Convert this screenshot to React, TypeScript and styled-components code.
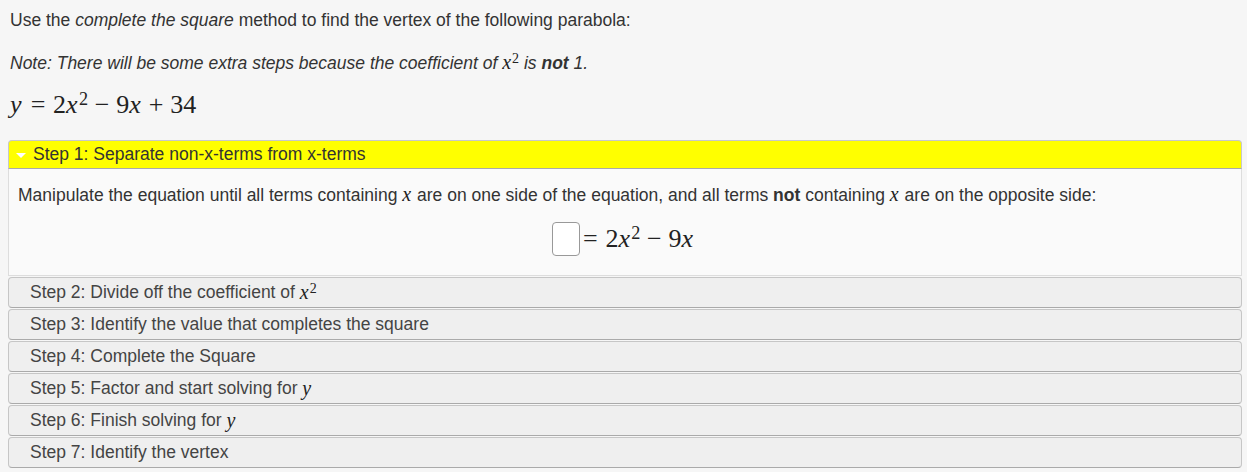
import styled, { createGlobalStyle } from 'styled-components'

const GlobalStyle = createGlobalStyle`
  html, body {
    margin: 0;
    padding: 0;
    background: #f6f6f6;
  }
  body {
    font-family: "Liberation Sans", Arial, sans-serif;
    font-size: 17.5px;
    color: #333;
  }
`

const Page = styled.div`
  display: flex;
  flex-direction: column;
  padding: 10px 5px 0 8px;
`

const Paragraph = styled.p<{ $italic?: boolean }>`
  margin: 0;
  padding-left: 2px;
  line-height: 20px;
  font-style: ${({ $italic }) => ($italic ? 'italic' : 'normal')};
`

const Spacer = styled.div<{ $h: number }>`
  height: ${({ $h }) => $h}px;
  flex: none;
`

const MathBlock = styled.div`
  padding-left: 2px;
  height: 34px;
  display: flex;
  align-items: center;
`

const Math = styled.span<{ $size?: number }>`
  font-family: "Liberation Serif", "Times New Roman", serif;
  font-size: ${({ $size }) => $size ?? 26}px;
  color: #222;
  white-space: nowrap;
  font-style: normal;
`

const V = styled.i`
  font-style: italic;
  padding-right: 0.05em;
`

const Sup = styled.sup`
  font-size: 0.7em;
  vertical-align: 0.45em;
  line-height: 0;
`

const Rel = styled.span<{ $noLeft?: boolean }>`
  padding: 0 0.3em;
  padding-left: ${({ $noLeft }) => ($noLeft ? '0.05em' : '0.3em')};
`

const Bin = styled.span`
  padding: 0 0.26em;
`

const Accordion = styled.div`
  display: flex;
  flex-direction: column;
`

const OpenHeader = styled.div`
  height: 27px;
  display: flex;
  align-items: center;
  gap: 7px;
  padding-left: 7px;
  background: #ffff00;
  border: 1px solid #c8c8c8;
  border-bottom-color: #aaa;
  border-radius: 4px 4px 0 0;
  color: #333;
`

const Caret = styled.span`
  width: 0;
  height: 0;
  border-left: 5px solid transparent;
  border-right: 5px solid transparent;
  border-top: 5px solid #fff;
  margin-top: 1px;
`

const Panel = styled.div`
  background: #fafafa;
  border: 1px solid #ddd;
  border-top: none;
  padding: 14px 9px 0 9px;
  height: 92px;
  display: flex;
  flex-direction: column;
  color: #333;
`

const PanelEquation = styled.div`
  display: flex;
  justify-content: center;
  align-items: center;
  margin-top: 16px;
  padding-right: 4px;
`

const AnswerBox = styled.span`
  display: inline-block;
  width: 26px;
  height: 32px;
  background: #fff;
  border: 1px solid #999;
  border-radius: 4px;
  margin-right: 2px;
`

const StepRow = styled.div`
  height: 29px;
  margin-top: 1px;
  display: flex;
  align-items: center;
  padding-left: 21px;
  background: #efefef;
  border: 1px solid #c6c6c6;
  border-bottom-color: #aaa;
  border-radius: 4px;
  color: #444;
`

const steps: React.ReactNode[] = [
  <>Step 2: Divide off the coefficient of&nbsp;<Math $size={20}><V>x</V><Sup>2</Sup></Math></>,
  <>Step 3: Identify the value that completes the square</>,
  <>Step 4: Complete the Square</>,
  <>Step 5: Factor and start solving for&nbsp;<Math $size={20}><V>y</V></Math></>,
  <>Step 6: Finish solving for&nbsp;<Math $size={20}><V>y</V></Math></>,
  <>Step 7: Identify the vertex</>,
]

export default function App() {
  return (
    <>
      <GlobalStyle />
      <Page>
        <Paragraph>
          Use the <i>complete the square</i> method to find the vertex of the following parabola:
        </Paragraph>
        <Spacer $h={22} />
        <Paragraph $italic>
          Note: There will be some extra steps because the coefficient of{' '}
          <Math $size={20}><V>x</V><Sup>2</Sup></Math> is <b>not</b> 1.
        </Paragraph>
        <Spacer $h={15} />
        <MathBlock>
          <Math>
            <V>y</V><Rel>=</Rel>2<V>x</V><Sup>2</Sup><Bin>−</Bin>9<V>x</V><Bin>+</Bin>34
          </Math>
        </MathBlock>
        <Spacer $h={18} />
        <Accordion>
          <OpenHeader>
            <Caret />
            Step 1: Separate non-x-terms from x-terms
          </OpenHeader>
          <Panel>
            <div>
              Manipulate the equation until all terms containing <Math $size={20}><V>x</V></Math> are on one
              side of the equation, and all terms <b>not</b> containing <Math $size={20}><V>x</V></Math> are
              on the opposite side:
            </div>
            <PanelEquation>
              <AnswerBox />
              <Math>
                <Rel $noLeft>=</Rel>2<V>x</V><Sup>2</Sup><Bin>−</Bin>9<V>x</V>
              </Math>
            </PanelEquation>
          </Panel>
          {steps.map((s, i) => (
            <StepRow key={i}>{s}</StepRow>
          ))}
        </Accordion>
      </Page>
    </>
  )
}
